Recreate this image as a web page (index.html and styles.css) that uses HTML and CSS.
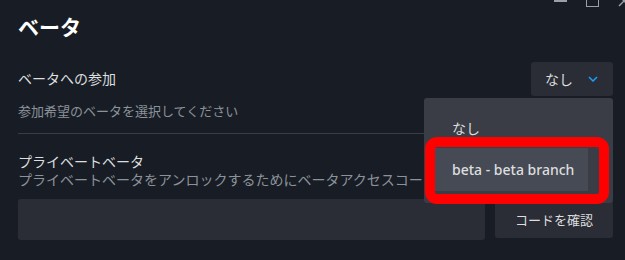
FILE: index.html
```html
<!DOCTYPE html>
<html lang="ja">
<head>
<meta charset="UTF-8">
<title>ベータ</title>
<link rel="stylesheet" href="styles.css">
</head>
<body>

<div class="winControls">
    <span class="winMin"></span>
    <span class="winMax"></span>
    <svg class="winClose" width="12" height="12" viewBox="0 0 12 12"><path d="M1 1L11 11M11 1L1 11" stroke="#9aa0a8" stroke-width="1.4"/></svg>
</div>

<div class="page">
    <h2 class="pageTitle">ベータ</h2>

    <div class="settingRow">
        <div class="settingLabel">ベータへの参加</div>
        <div class="dropWrap">
            <div class="dropButton">
                <span>なし</span>
                <svg width="10" height="6" viewBox="0 0 10 6"><path d="M1 1L5 5L9 1" fill="none" stroke="#1a9fff" stroke-width="1.5"/></svg>
            </div>
            <!-- open menu -->
            <div class="dropMenu">
                <div class="dropItem">なし</div>
                <div class="dropItem selected">beta - beta branch</div>
            </div>
        </div>
    </div>
    <div class="settingDesc">参加希望のベータを選択してください</div>

    <div class="divider"></div>

    <div class="settingLabel privTitle">プライベートベータ</div>
    <div class="settingDesc privDesc">プライベートベータをアンロックするためにベータアクセスコードを入力してください</div>

    <div class="codeRow">
        <input type="text" class="codeInput">
        <button class="codeButton">コードを確認</button>
    </div>
</div>

</body>
</html>
```

FILE: styles.css
```css
body {
    margin: 0;
    background-color: #181d25;
    font-family: "Noto Sans", "Noto Sans CJK JP", sans-serif;
    color: #dcdedf;
    overflow: hidden;
}

.winControls {
    position: absolute;
    top: -7px;
    right: 0;
    display: flex;
    align-items: flex-end;
    gap: 19px;
    height: 14px;
}

.winMin {
    width: 13px;
    height: 2px;
    background-color: #9aa0a8;
    margin-bottom: 5px;
}

.winMax {
    width: 11px;
    height: 11px;
    border: 1px solid #9aa0a8;
}

.winClose {
    margin-right: -5px;
}

.page {
    padding: 0 12px 0 18px;
}

.pageTitle {
    margin: 0;
    padding-top: 12px;
    font-size: 21px;
    line-height: 30px;
    font-weight: bold;
    color: #ffffff;
}

.settingRow {
    display: flex;
    justify-content: space-between;
    align-items: center;
    margin-top: 20px;
}

.settingLabel {
    font-size: 14px;
    line-height: 18px;
    color: #dcdedf;
}

.settingDesc {
    font-size: 13px;
    line-height: 18px;
    color: #8b929a;
    margin-top: 6px;
    white-space: nowrap;
}

.dropWrap {
    position: relative;
}

.dropButton {
    width: 82px;
    height: 34px;
    box-sizing: border-box;
    padding: 0 15px 0 14px;
    display: flex;
    justify-content: space-between;
    align-items: center;
    background-color: #2a2d35;
    border-radius: 3px;
    font-size: 14px;
    color: #dcdedf;
}

.dropMenu {
    position: absolute;
    top: 36px;
    right: 0;
    width: 189px;
    height: 105px;
    box-sizing: border-box;
    padding: 10px 25px 0 11px;
    background-color: #3a3d46;
    border-radius: 3px;
    z-index: 2;
}

.dropItem {
    position: relative;
    height: 40px;
    padding-left: 17px;
    display: flex;
    align-items: center;
    font-size: 14px;
    color: #dcdedf;
}

.dropItem.selected {
    height: 43px;
    background-color: #464a54;
    font-weight: 500;
    font-size: 14px;
}

.dropItem.selected::after {
    content: "";
    position: absolute;
    top: -11px;
    left: -10px;
    right: -21px;
    bottom: -13px;
    border: 10px solid #ff0000;
    border-radius: 12px;
}

.divider {
    height: 1px;
    background-color: #3a3d44;
    margin-top: 13px;
}

.privTitle {
    margin-top: 19px;
}

.privDesc {
    font-size: 14px;
    line-height: 17px;
    margin-top: 0;
    width: 406px;
    overflow: hidden;
}

.codeRow {
    display: flex;
    align-items: center;
    gap: 10px;
    margin-top: 11px;
}

.codeInput {
    flex: 1;
    height: 41px;
    box-sizing: border-box;
    border: none;
    border-radius: 3px;
    background-color: #2a2d35;
}

.codeButton {
    width: 118px;
    height: 37px;
    border: none;
    border-radius: 3px;
    background-color: #2a2d35;
    color: #dcdedf;
    font-family: inherit;
    font-size: 13px;
}
```
